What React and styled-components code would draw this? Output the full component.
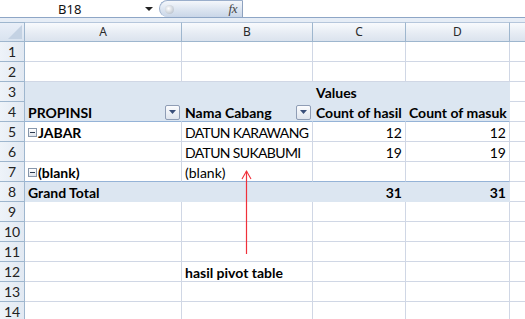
import styled, { createGlobalStyle } from 'styled-components';

const GlobalStyle = createGlobalStyle`
  html, body {
    margin: 0;
    padding: 0;
    background: #ffffff;
    overflow: hidden;
  }
  body {
    font-family: Lato, "Open Sans", "Liberation Sans", sans-serif;
  }
`;

const COLS = [25, 157, 131, 93, 104, 40];

const rows = [
  { n: 1 },
  { n: 2 },
  {
    n: 3,
    band: true,
    cells: [null, null, { text: 'Values', bold: true }, null],
  },
  {
    n: 4,
    band: true,
    line: true,
    cells: [
      { text: 'PROPINSI', bold: true, filter: true },
      { text: 'Nama Cabang', bold: true, filter: true },
      { text: 'Count of hasil', bold: true },
      { text: 'Count of masuk', bold: true },
    ],
  },
  {
    n: 5,
    cells: [
      { text: 'JABAR', bold: true, toggle: true },
      { text: 'DATUN KARAWANG', tight: true },
      { text: '12', right: true },
      { text: '12', right: true },
    ],
  },
  {
    n: 6,
    cells: [
      null,
      { text: 'DATUN SUKABUMI', tight: true },
      { text: '19', right: true },
      { text: '19', right: true },
    ],
  },
  {
    n: 7,
    line: true,
    cells: [
      { text: '(blank)', bold: true, toggle: true },
      { text: '(blank)' },
      null,
      null,
    ],
  },
  {
    n: 8,
    band: true,
    cells: [
      { text: 'Grand Total', bold: true },
      null,
      { text: '31', bold: true, right: true },
      { text: '31', bold: true, right: true },
    ],
  },
  { n: 9 },
  { n: 10 },
  { n: 11 },
  { n: 12, cells: [null, { text: 'hasil pivot table', bold: true }, null, null] },
  { n: 13 },
  { n: 14 },
];

function FilterButton() {
  return (
    <FilterBox>
      <svg width="7" height="4" viewBox="0 0 7 4">
        <path d="M0 0 H7 L3.5 4 Z" fill="#3a4f7a" />
      </svg>
    </FilterBox>
  );
}

function Toggle() {
  return (
    <ToggleBox>
      <span />
    </ToggleBox>
  );
}

export default function App() {
  return (
    <Page>
      <GlobalStyle />
      <FormulaBar>
        <NameBox>B18</NameBox>
        <NameArrow>
          <svg width="8" height="4" viewBox="0 0 8 4">
            <path d="M0 0 H8 L4 4 Z" fill="#222" />
          </svg>
        </NameArrow>
        <Pill>
          <PillDot />
          <Fx>fx</Fx>
        </Pill>
      </FormulaBar>
      <Gap />

      <Sheet>
        <HeaderRow>
          <Corner>
            <svg width="14" height="14" viewBox="0 0 14 14">
              <path d="M14 0 V14 H0 Z" fill="#c4d2e3" />
            </svg>
          </Corner>
          {['A', 'B', 'C', 'D', ''].map((c, i) => (
            <ColHead key={i} $w={COLS[i + 1]}>
              {c}
            </ColHead>
          ))}
        </HeaderRow>

        {rows.map((row) => (
          <Row key={row.n}>
            <RowHead>{row.n}</RowHead>
            {[0, 1, 2, 3].map((i) => {
              const cell = row.cells && row.cells[i];
              return (
                <Cell
                  key={i}
                  $w={COLS[i + 1]}
                  $band={row.band}
                  $line={row.line}
                  $right={cell && cell.right}
                  $bold={cell && cell.bold}
                >
                  {cell && cell.toggle && <Toggle />}
                  {cell && <CellText $tight={cell.tight}>{cell.text}</CellText>}
                  {cell && cell.filter && <FilterButton />}
                </Cell>
              );
            })}
            <Cell $w={COLS[5]} />
          </Row>
        ))}

        <Arrow width="20" height="90" viewBox="0 0 20 90">
          <path d="M6.5 86 V3" stroke="#f0303a" strokeWidth="1.2" fill="none" />
          <path d="M2 11 L6.5 3 L11 11" stroke="#f0303a" strokeWidth="1.1" fill="none" />
        </Arrow>
      </Sheet>
    </Page>
  );
}

const Page = styled.div`
  width: 525px;
  height: 319px;
  overflow: hidden;
  background: #ffffff;
`;

const FormulaBar = styled.div`
  display: flex;
  align-items: stretch;
  height: 17px;
  background: #ffffff;
  border-bottom: 1px solid #8ea6c6;
`;

const NameBox = styled.div`
  width: 140px;
  padding-left: 58px;
  box-sizing: border-box;
  font-family: "Noto Sans", "Liberation Sans", sans-serif;
  font-size: 13px;
  line-height: 19px;
  color: #111;
`;

const NameArrow = styled.div`
  width: 18px;
  display: flex;
  align-items: center;
  justify-content: center;
  padding-top: 1px;
`;

const Pill = styled.div`
  width: 84px;
  box-sizing: border-box;
  margin-left: 1px;
  border-radius: 9px 0 0 9px;
  border: 1px solid #9aaecb;
  border-right: 1px solid #8ea2bf;
  border-bottom: none;
  background: linear-gradient(#f4f7fb, #dbe4f0 55%, #c9d6e8);
  display: flex;
  align-items: center;
  justify-content: space-between;
  padding: 0 5px 0 5px;
`;

const PillDot = styled.div`
  width: 9px;
  height: 9px;
  border-radius: 50%;
  background: radial-gradient(circle at 40% 40%, #ffffff, #c2c9d2 70%, #a9b2be);
`;

const Fx = styled.span`
  font-family: "Liberation Serif", serif;
  font-style: italic;
  font-size: 13px;
  color: #444;
  letter-spacing: -0.5px;
`;

const Gap = styled.div`
  height: 4px;
  background: #e6edf6;
`;

const Sheet = styled.div`
  position: relative;
`;

const HeaderRow = styled.div`
  display: flex;
  height: 20px;
`;

const Corner = styled.div`
  width: 25px;
  flex: none;
  box-sizing: border-box;
  background: linear-gradient(#e9eff8, #d9e3ef);
  border-right: 1px solid #9eb6ce;
  border-bottom: 1px solid #9eb6ce;
  border-top: 1px solid #9eb6ce;
  display: flex;
  align-items: flex-end;
  justify-content: flex-end;
  padding: 0 2px 2px 0;
`;

const ColHead = styled.div`
  width: ${(p) => p.$w}px;
  flex: none;
  box-sizing: border-box;
  background: linear-gradient(#f8fafd, #e5ebf3 60%, #dbe3ee);
  border-right: 1px solid #9eb6ce;
  border-bottom: 1px solid #9eb6ce;
  border-top: 1px solid #b5c6db;
  font-family: "Noto Sans", "Open Sans", sans-serif;
  font-size: 12px;
  line-height: 18px;
  text-align: center;
  color: #2a2a2a;
`;

const Row = styled.div`
  display: flex;
  height: 20px;
`;

const RowHead = styled.div`
  width: 25px;
  flex: none;
  box-sizing: border-box;
  background: linear-gradient(90deg, #eef3f9, #e2e9f2);
  border-right: 1px solid #9eb6ce;
  border-bottom: 1px solid #9eb6ce;
  font-size: 14px;
  line-height: 20px;
  text-align: center;
  color: #222;
`;

const Cell = styled.div`
  width: ${(p) => p.$w}px;
  flex: none;
  box-sizing: border-box;
  display: flex;
  align-items: center;
  justify-content: ${(p) => (p.$right ? 'flex-end' : 'flex-start')};
  padding: 1px 3px 0 2px;
  background: ${(p) => (p.$band ? '#dce6f1' : '#ffffff')};
  border-right: 1px solid ${(p) => (p.$band ? '#dce6f1' : '#d0d7e5')};
  border-bottom: 1px solid
    ${(p) => (p.$line ? '#95b3d7' : p.$band ? '#dce6f1' : '#d0d7e5')};
  font-size: 14px;
  font-weight: ${(p) => (p.$bold ? 700 : 400)};
  color: #000;
  white-space: nowrap;
  overflow: visible;
`;

const CellText = styled.span`
  letter-spacing: ${(p) => (p.$tight ? '-0.65px' : '0')};
  margin-left: 1px;
`;

const FilterBox = styled.div`
  margin-left: auto;
  margin-right: -2px;
  width: 15px;
  height: 15px;
  box-sizing: border-box;
  border: 1px solid #8f9db5;
  border-radius: 2px;
  background: linear-gradient(#fbfcfe, #dfe5ee);
  display: flex;
  align-items: center;
  justify-content: center;
`;

const ToggleBox = styled.div`
  width: 9px;
  height: 9px;
  box-sizing: border-box;
  border: 1px solid #8796aa;
  background: linear-gradient(#ffffff, #dde3ea);
  display: flex;
  align-items: center;
  justify-content: center;
  margin-left: 1px;

  span {
    width: 5px;
    height: 1px;
    background: #2b3a50;
  }
`;

const Arrow = styled.svg`
  position: absolute;
  left: 240px;
  top: 146px;
`;
